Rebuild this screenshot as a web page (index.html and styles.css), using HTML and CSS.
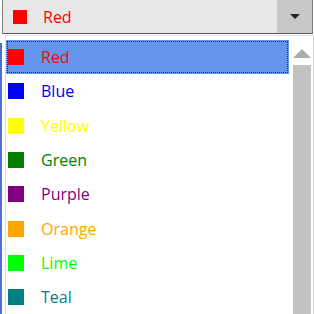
FILE: index.html
```html
<!DOCTYPE html>
<html lang="en">
<head>
    <meta charset="UTF-8">
    <title>Colour Picker</title>
    <link rel="stylesheet" href="styles.css">
</head>
<body>
    <div class="combo">
        <div class="value">
            <span class="swatch" style="background-color: #ff0000;"></span>
            <span class="label" style="color: #ff0000;">Red</span>
        </div>
        <div class="drop-btn">
            <svg width="10" height="5" viewBox="0 0 10 5"><path d="M0 0 H10 L5 5 Z" fill="#222"/></svg>
        </div>
    </div>

    <div class="popup">
        <div class="edge"></div>
        <div class="list">
            <ul class="items">
                <li class="item selected"><span class="swatch" style="background-color: #ff0000;"></span><span class="label" style="color: #ff0000;">Red</span></li>
                <li class="item"><span class="swatch" style="background-color: #0000ff;"></span><span class="label" style="color: #0000ff;">Blue</span></li>
                <li class="item"><span class="swatch" style="background-color: #ffff00;"></span><span class="label" style="color: #ffff00;">Yellow</span></li>
                <li class="item"><span class="swatch" style="background-color: #008000;"></span><span class="label" style="color: #008000;">Green</span></li>
                <li class="item"><span class="swatch" style="background-color: #800080;"></span><span class="label" style="color: #800080;">Purple</span></li>
                <li class="item"><span class="swatch" style="background-color: #ffa500;"></span><span class="label" style="color: #ffa500;">Orange</span></li>
                <li class="item"><span class="swatch" style="background-color: #00ff00;"></span><span class="label" style="color: #00ff00;">Lime</span></li>
                <li class="item"><span class="swatch" style="background-color: #008080;"></span><span class="label" style="color: #008080;">Teal</span></li>
            </ul>
            <div class="scrollbar">
                <div class="arrow-up">
                    <svg width="18" height="9" viewBox="0 0 18 9"><path d="M0 9 L9 0 L18 9 Z" fill="#ababab"/></svg>
                </div>
                <div class="thumb"></div>
            </div>
        </div>
    </div>
</body>
</html>
```

FILE: styles.css
```css
body {
    margin: 0;
    width: 314px;
    height: 314px;
    overflow: hidden;
    background-color: #ffffff;
    font-family: "Open Sans", "Noto Sans", sans-serif;
}

.combo {
    display: flex;
    margin-left: 2px;
    width: 309px;
    height: 33px;
    border-left: 1px solid #7a7a7a;
    border-right: 1px solid #7a7a7a;
    border-bottom: 1px solid #5a5a5a;
    background-color: #e8e8e8;
}
.value {
    flex: 1;
    display: flex;
    align-items: center;
    padding-left: 10px;
}
.value .swatch {
    width: 14px;
    height: 14px;
    margin-right: 16px;
}
.value .label {
    font-size: 16px;
}
.drop-btn {
    width: 35px;
    display: flex;
    align-items: center;
    justify-content: center;
    background-color: #c8c8c8;
}

.popup {
    display: flex;
    height: 280px;
}
.edge {
    width: 2px;
    margin-top: 9px;
    background-color: #4b6fd6;
}
.list {
    flex: 1;
    display: flex;
    margin-left: 3px;
    margin-top: 1px;
    border-left: 1px solid #dcdcdc;
    border-right: 1px solid #d4d4d4;
    border-top: 1px solid #e4e4e4;
    padding-top: 4px;
}
.items {
    list-style: none;
    margin: 0;
    padding: 0;
    width: 283px;
}
.item {
    display: flex;
    align-items: center;
    height: 34.33px;
    padding-left: 2px;
    box-sizing: border-box;
}
.item .swatch {
    width: 16px;
    height: 16px;
    margin-right: 17px;
}
.item .label {
    font-size: 16px;
}
.selected {
    background-color: #6495ed;
    outline: 1px dotted #1a2a6a;
    outline-offset: -2px;
}
.scrollbar {
    margin-left: 4px;
    width: 18px;
    display: flex;
    flex-direction: column;
}
.arrow-up {
    height: 23px;
    padding-top: 2px;
    display: flex;
    align-items: center;
    justify-content: center;
}
.thumb {
    flex: 1;
    background-color: #c2c2c2;
}
```
